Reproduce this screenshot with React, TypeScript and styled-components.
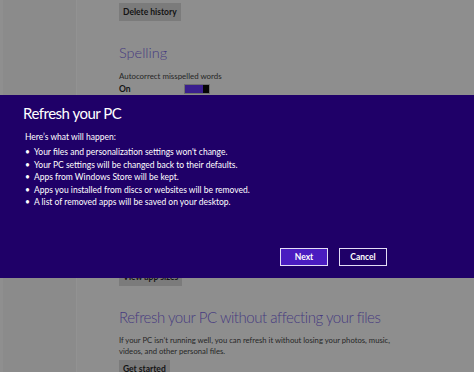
import styled, { createGlobalStyle } from 'styled-components';

const GlobalStyle = createGlobalStyle`
  html, body {
    margin: 0;
    padding: 0;
    background: #8d8d8d;
  }
  body {
    font-family: Lato, 'Open Sans', sans-serif;
    overflow: hidden;
  }
`;

const steps = [
  "Your files and personalization settings won't change.",
  'Your PC settings will be changed back to their defaults.',
  'Apps from Windows Store will be kept.',
  'Apps you installed from discs or websites will be removed.',
  'A list of removed apps will be saved on your desktop.',
];

const App = () => {
  return (
    <>
      <GlobalStyle />
      <Screen>
        <Sidebar />
        <Settings>
          <GreyButton>Delete history</GreyButton>
          <SectionTitle>Spelling</SectionTitle>
          <Label>Autocorrect misspelled words</Label>
          <ToggleRow>
            <strong>On</strong>
            <Toggle>
              <span />
            </Toggle>
          </ToggleRow>
          {/* space taken by settings that the dialog covers */}
          <Covered />
          <GreyButton>View app sizes</GreyButton>
          <SectionTitle $big>Refresh your PC without affecting your files</SectionTitle>
          <Paragraph>
            If your PC isn&rsquo;t running well, you can refresh it without losing your photos, music,
            <br />
            videos, and other personal files.
          </Paragraph>
          <GreyButton>Get started</GreyButton>
        </Settings>

        <Dialog>
          <DialogTitle>Refresh your PC</DialogTitle>
          <Intro>Here&rsquo;s what will happen:</Intro>
          <StepList>
            {steps.map((step) => (
              <li key={step}>{step}</li>
            ))}
          </StepList>
          <Actions>
            <DialogButton $primary>Next</DialogButton>
            <DialogButton>Cancel</DialogButton>
          </Actions>
        </Dialog>
      </Screen>
    </>
  );
};

export default App;

const Screen = styled.div`
  position: relative;
  width: 474px;
  height: 372px;
  overflow: hidden;
  display: grid;
  grid-template-columns: 77px 1fr;
  background: #8e8e8e;
`;

const Sidebar = styled.div`
  background: #8b8b8b;
  border-left: 3px solid #8f8f8f;
  border-right: 1px solid #929292;
`;

const Settings = styled.div`
  padding: 3px 0 0 42px;
  display: flex;
  flex-direction: column;
  align-items: flex-start;
`;

const GreyButton = styled.div`
  background: #7b7b7b;
  color: #141414;
  font-size: 8.5px;
  font-weight: 700;
  padding: 3px 4px;
  line-height: 12px;
`;

const SectionTitle = styled.h2<{ $big?: boolean }>`
  margin: ${(p) => (p.$big ? '21px 0 8px' : '23px 0 8px')};
  font-size: ${(p) => (p.$big ? '15px' : '14.5px')};
  letter-spacing: ${(p) => (p.$big ? '-0.45px' : '0')};
  font-weight: 300;
  color: #463a80;
  line-height: ${(p) => (p.$big ? '20px' : '18px')};
  white-space: nowrap;
`;

const Label = styled.div`
  font-size: 7.9px;
  color: #262626;
  line-height: 12px;
`;

const ToggleRow = styled.div`
  display: flex;
  align-items: center;
  gap: 53px;
  margin-top: 1px;
  height: 12px;
  font-size: 8.5px;
  color: #141414;
`;

const Toggle = styled.div`
  width: 26px;
  height: 10px;
  box-sizing: border-box;
  border: 1px solid #6f6f6f;
  background: #3a1e8e;
  display: flex;
  justify-content: flex-end;
  span {
    width: 6px;
    height: 100%;
    background: #050505;
  }
`;

const Covered = styled.div`
  height: 173px;
`;

const Paragraph = styled.p`
  margin: 0 0 3px;
  font-size: 7.7px;
  line-height: 11px;
  color: #262626;
  white-space: nowrap;
`;

const Dialog = styled.section`
  position: absolute;
  left: 0;
  top: 95px;
  width: 100%;
  height: 183px;
  box-sizing: border-box;
  background: #1f0068;
  color: #ffffff;
  padding: 7px 0 0 23px;
  display: flex;
  flex-direction: column;
  align-items: flex-start;
`;

const DialogTitle = styled.h1`
  margin: 0;
  font-size: 15px;
  letter-spacing: -0.5px;
  font-weight: 400;
  line-height: 22px;
`;

const Intro = styled.div`
  margin: 7px 0 0 2px;
  font-size: 8.5px;
  line-height: 12px;
`;

const StepList = styled.ul`
  list-style: none;
  margin: 3px 0 0 2px;
  padding: 0;
  font-size: 8.5px;
  li {
    line-height: 12.5px;
    white-space: nowrap;
  }
  li::before {
    content: '•';
    margin-right: 4px;
  }
`;

const Actions = styled.div`
  align-self: flex-end;
  margin: auto 87px 12px 0;
  display: flex;
  gap: 11px;
`;

const DialogButton = styled.div<{ $primary?: boolean }>`
  width: 48px;
  height: 18px;
  box-sizing: border-box;
  border: 1.5px solid #e4ddf6;
  background: ${(p) => (p.$primary ? '#4a1cc0' : '#1f0068')};
  color: #ffffff;
  font-size: 8.5px;
  font-weight: 700;
  display: flex;
  align-items: center;
  justify-content: center;
`;
